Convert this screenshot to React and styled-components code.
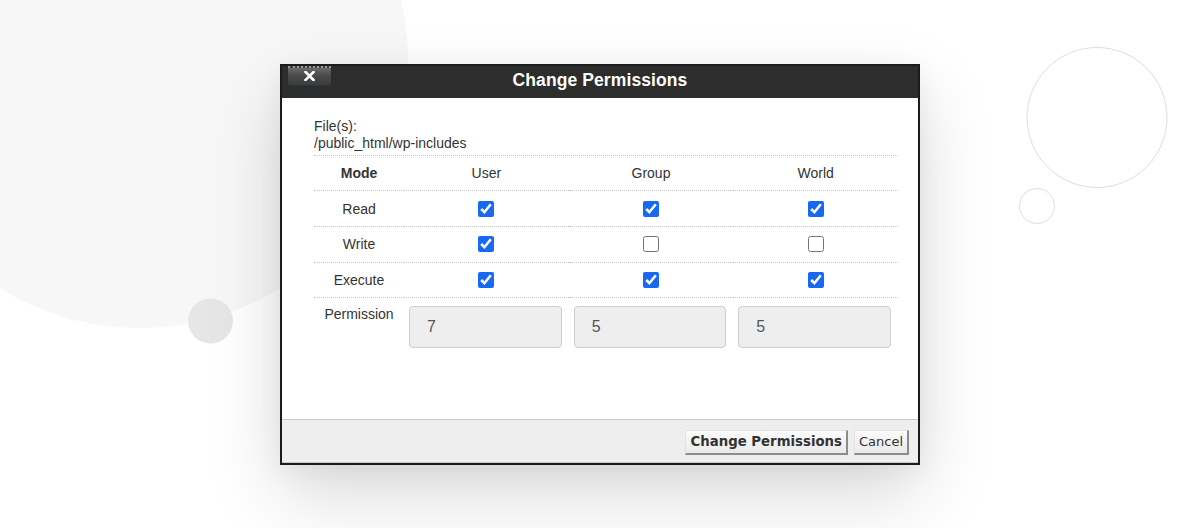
import React, { useState } from "react";
import styled, { createGlobalStyle } from "styled-components";

const GlobalStyle = createGlobalStyle`
  html, body {
    margin: 0;
    padding: 0;
    background: #fff;
  }
  * {
    box-sizing: border-box;
  }
`;

const Page = styled.div`
  position: relative;
  width: 1200px;
  height: 528px;
  overflow: hidden;
  background: #fff;
  display: flex;
  align-items: center;
  justify-content: center;
  font-family: "Liberation Sans", Arial, sans-serif;
`;

const Backdrop = styled.svg`
  position: absolute;
  top: 0;
  left: 0;
  width: 1200px;
  height: 528px;
`;

const Dialog = styled.div`
  position: relative;
  width: 640px;
  height: 401px;
  border: 2px solid #1b1b1b;
  background: #fff;
  display: flex;
  flex-direction: column;
  box-shadow: 0 30px 70px rgba(0, 0, 0, 0.15), 0 6px 24px rgba(0, 0, 0, 0.05);
`;

const TitleBar = styled.div`
  height: 32px;
  background: #2d2d2d;
  display: grid;
  grid-template-columns: 1fr auto 1fr;
  align-items: start;
`;

const CloseButton = styled.button`
  justify-self: start;
  margin-left: 6px;
  width: 43px;
  height: 20px;
  padding: 0;
  border: none;
  border-top: 2px dotted #9a9a9a;
  border-bottom: 1px solid #1d3a4a;
  border-radius: 0 0 3px 3px;
  background: linear-gradient(#6a6a6a, #4a4a4a 45%, #3c3c3c);
  display: flex;
  align-items: center;
  justify-content: center;
  cursor: pointer;
`;

const Title = styled.h2`
  margin: 0;
  height: 29px;
  line-height: 29px;
  color: #fff;
  font-size: 17.5px;
  font-weight: 700;
  letter-spacing: 0.1px;
`;

const Body = styled.div`
  flex: 1;
  padding: 20px 20px 0 32px;
`;

const Files = styled.div`
  font-size: 14px;
  line-height: 17px;
  color: #333;
  padding-bottom: 3px;
  border-bottom: 1px dotted #c4c4c4;
`;

const Grid = styled.div`
  display: grid;
  grid-template-columns: 90px repeat(3, 1fr);
`;

const Cell = styled.div`
  height: 35.7px;
  display: flex;
  align-items: center;
  justify-content: center;
  font-size: 14px;
  color: #333;
  font-weight: ${(p) => (p.$head ? 700 : 400)};
  border-bottom: 1px dotted #c4c4c4;
`;

const LabelCell = styled.div`
  padding-top: 8px;
  text-align: center;
  font-size: 14px;
  line-height: 17px;
  color: #333;
`;

const InputCell = styled.div`
  padding: 8px 7px 0 5px;
`;

const Check = styled.input.attrs({ type: "checkbox" })`
  width: 16px;
  height: 16px;
  margin: 0;
  accent-color: #1769f2;
`;

const OctalInput = styled.input`
  width: 100%;
  height: 42px;
  border: 1px solid #cfcfcf;
  border-radius: 4px;
  background: #eeeeee;
  padding: 0 0 0 17px;
  font-family: "Liberation Sans", Arial, sans-serif;
  font-size: 16px;
  color: #555;
  outline: none;
`;

const Footer = styled.div`
  height: 44px;
  border-top: 1px solid #c8c8c8;
  border-bottom: 1px solid #c8c8c8;
  background: #eeeeee;
  display: flex;
  justify-content: flex-end;
  align-items: flex-start;
  gap: 6px;
  padding: 10px 9px 0 0;
`;

const Button = styled.button`
  height: 25px;
  padding: 0 4px;
  font-family: "DejaVu Sans", Verdana, sans-serif;
  font-size: ${(p) => (p.$primary ? "13.3px" : "13px")};
  font-weight: ${(p) => (p.$primary ? 700 : 400)};
  color: #333;
  background: linear-gradient(#fbfbfb, #e9e9e9);
  border-top: 1px solid #e2e2e2;
  border-left: 1px solid #e2e2e2;
  border-right: 2px solid #8c8c8c;
  border-bottom: 2px solid #8c8c8c;
  border-radius: 0;
  cursor: pointer;
`;

const modes = ["Read", "Write", "Execute"];
const bits = [4, 2, 1];

export default function App() {
  const [perms, setPerms] = useState({
    Read: [true, true, true],
    Write: [true, false, false],
    Execute: [true, true, true],
  });

  const toggle = (mode, i) => {
    setPerms((prev) => {
      const row = [...prev[mode]];
      row[i] = !row[i];
      return { ...prev, [mode]: row };
    });
  };

  const octal = [0, 1, 2].map((i) =>
    modes.reduce((sum, m, k) => sum + (perms[m][i] ? bits[k] : 0), 0)
  );

  return (
    <>
      <GlobalStyle />
      <Page>
        <Backdrop viewBox="0 0 1200 528">
          <circle cx="140" cy="60" r="268" fill="#f7f7f7" />
          <circle cx="210.5" cy="321" r="22.5" fill="#e6e6e6" />
          <circle cx="1097" cy="117.5" r="70" fill="#fff" stroke="#dddddd" strokeWidth="1" />
          <circle cx="1037" cy="206" r="17.5" fill="#fff" stroke="#dddddd" strokeWidth="1" />
        </Backdrop>
        <Dialog>
          <TitleBar>
            <CloseButton aria-label="Close">
              <svg width="11" height="10" viewBox="0 0 11 10">
                <path d="M1.5 1 L9.5 9 M9.5 1 L1.5 9" stroke="#fff" strokeWidth="2.6" strokeLinecap="square" />
              </svg>
            </CloseButton>
            <Title>Change Permissions</Title>
            <div />
          </TitleBar>
          <Body>
            <Files>
              File(s):
              <br />
              /public_html/wp-includes
            </Files>
            <Grid>
              <Cell $head>Mode</Cell>
              <Cell>User</Cell>
              <Cell>Group</Cell>
              <Cell>World</Cell>
              {modes.map((m) => (
                <React.Fragment key={m}>
                  <Cell>{m}</Cell>
                  {perms[m].map((on, i) => (
                    <Cell key={i}>
                      <Check checked={on} onChange={() => toggle(m, i)} />
                    </Cell>
                  ))}
                </React.Fragment>
              ))}
              <LabelCell>Permission</LabelCell>
              {octal.map((v, i) => (
                <InputCell key={i}>
                  <OctalInput value={v} readOnly />
                </InputCell>
              ))}
            </Grid>
          </Body>
          <Footer>
            <Button $primary>Change Permissions</Button>
            <Button>Cancel</Button>
          </Footer>
        </Dialog>
      </Page>
    </>
  );
}
